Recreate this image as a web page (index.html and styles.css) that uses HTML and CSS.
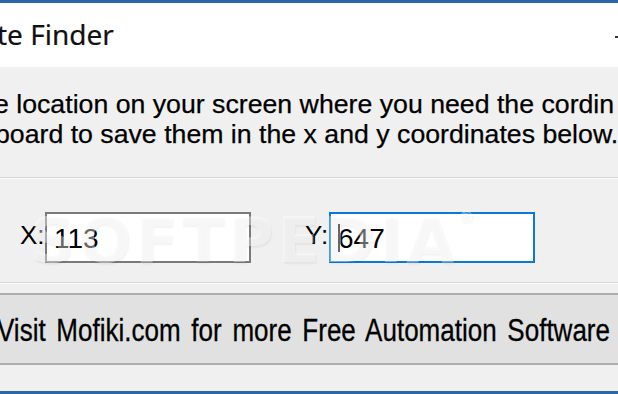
FILE: index.html
```html
<!DOCTYPE html>
<html>
<head>
<meta charset="utf-8">
<link rel="stylesheet" href="styles.css">
</head>
<body>
<div class="window">
  <div class="titlebar">
    <span class="title">te Finder</span>
    <span class="min"></span>
  </div>
  <div class="client">
    <div class="desc">
      <div class="line l1">e location on your screen where you need the cordin</div>
      <div class="line l2">board to save them in the x and y coordinates below.</div>
    </div>
    <div class="sep"></div>
    <div class="fields">
      <label class="lbl lx">X:</label>
      <div class="box bx"><span class="val">113</span></div>
      <label class="lbl ly">Y:</label>
      <div class="box by focus"><span class="val"><span class="caret"></span>647</span></div>
      <div class="watermark" aria-hidden="true">SOFTPEDIA<sup>®</sup></div>
    </div>
    <div class="sep sep2"></div>
    <div class="button"><span class="btext">Visit Mofiki.com for more Free Automation Software</span></div>
  </div>
</div>
</body>
</html>
```
FILE: styles.css
```css
html, body {
  margin: 0;
  padding: 0;
  background: #f0f0f0;
}
.window {
  width: 618px;
  height: 394px;
  overflow: hidden;
  box-sizing: border-box;
  border-top: 3px solid #2a67a8;
  border-bottom: 3px solid #2a67a8;
  background: #f0f0f0;
  display: flex;
  flex-direction: column;
}
.titlebar {
  height: 64px;
  background: #ffffff;
  display: flex;
  align-items: center;
  justify-content: space-between;
  flex-shrink: 0;
}
.title {
  font-family: "Noto Sans", "Open Sans", sans-serif;
  font-size: 28px;
  color: #111;
  margin-left: -3px;
  margin-top: -3px;
  -webkit-text-stroke: 0.2px #111;
}
.min {
  width: 3px;
  height: 2px;
  background: #333;
  margin-top: 4px;
}
.client {
  flex: 1;
  display: flex;
  flex-direction: column;
  font-family: "Liberation Sans", Arial, sans-serif;
  color: #000;
}
.desc {
  padding-top: 22px;
  font-size: 26.7px;
  line-height: 30px;
  white-space: nowrap;
  -webkit-text-stroke: 0.25px #000;
}
.line { margin-left: -6px; }
.l2 { margin-left: -5px; }
.sep {
  margin-top: 28px;
  height: 1px;
  background: #d6d6d6;
  border-bottom: 1px solid #fbfbfb;
}
.fields {
  position: relative;
  margin-top: 33px;
  height: 51px;
  display: flex;
  align-items: stretch;
}
.lbl {
  font-size: 26px;
  line-height: 26px;
  padding-top: 10px;
}
.lx { margin-left: 20px; width: 25px; }
.ly { margin-left: 54px; width: 24px; }
.box {
  width: 206px;
  box-sizing: border-box;
  background: #fff;
  border: 2px solid #7a7a7a;
  position: relative;
  z-index: 1;
}
.box.focus { border-color: #0a78d4; }
.val {
  display: block;
  font-size: 28px;
  line-height: 28px;
  padding: 11px 0 0 7px;
  position: relative;
}
.caret {
  position: absolute;
  left: 7px;
  top: 10px;
  width: 2px;
  height: 28px;
  background: #000;
}
.watermark {
  position: absolute;
  left: 30px;
  top: -8px;
  z-index: 2;
  font-family: "DejaVu Sans", sans-serif;
  font-weight: bold;
  font-size: 62px;
  letter-spacing: 4px;
  color: rgba(255,255,255,0.4);
  text-shadow: 1px 2px 2px rgba(0,0,0,0.05);
  pointer-events: none;
}
.watermark sup { font-size: 16px; vertical-align: 40px; }
.sep2 { margin-top: 19px; }
.button {
  margin: 9px -4px 0 -4px;
  height: 72px;
  box-sizing: border-box;
  background: #e1e1e1;
  border: 2px solid #adadad;
  display: flex;
  align-items: center;
}
.btext {
  display: inline-block;
  font-size: 26px;
  white-space: nowrap;
  margin-left: -1px;
  margin-top: 2px;
  word-spacing: 3.5px;
  transform: scaleY(1.2);
  -webkit-text-stroke: 0.25px #000;
}
```
